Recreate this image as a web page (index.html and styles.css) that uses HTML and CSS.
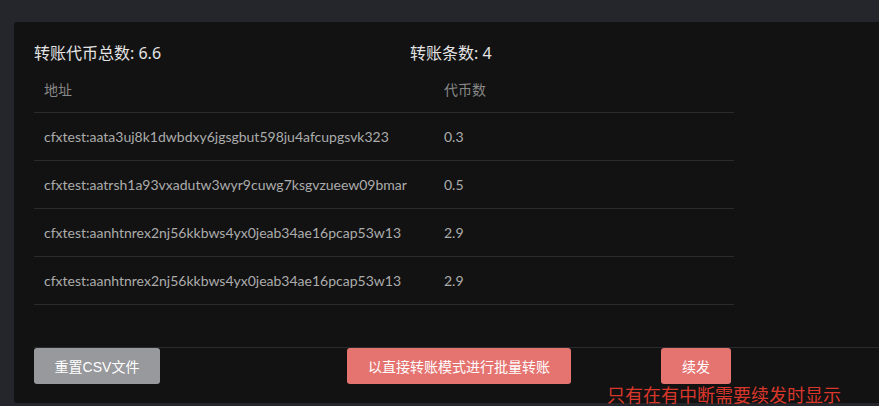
FILE: index.html
```html
<!DOCTYPE html>
<html lang="zh">
<head>
<meta charset="utf-8">
<title>批量转账</title>
<link rel="stylesheet" href="styles.css">
</head>
<body>
<div class="panel">
  <div class="summary">
    <span class="summary-item summary-total">转账代币总数: 6.6</span>
    <span class="summary-item">转账条数: 4</span>
  </div>
  <table class="list">
    <thead>
      <tr><th class="col-addr">地址</th><th class="col-amt">代币数</th></tr>
    </thead>
    <tbody>
      <tr><td>cfxtest:aata3uj8k1dwbdxy6jgsgbut598ju4afcupgsvk323</td><td>0.3</td></tr>
      <tr><td>cfxtest:aatrsh1a93vxadutw3wyr9cuwg7ksgvzueew09bmar</td><td>0.5</td></tr>
      <tr><td>cfxtest:aanhtnrex2nj56kkbws4yx0jeab34ae16pcap53w13</td><td>2.9</td></tr>
      <tr><td>cfxtest:aanhtnrex2nj56kkbws4yx0jeab34ae16pcap53w13</td><td>2.9</td></tr>
    </tbody>
  </table>
  <div class="footer">
    <div class="actions">
      <button class="btn btn-gray">重置CSV文件</button>
      <button class="btn btn-red btn-main">以直接转账模式进行批量转账</button>
      <button class="btn btn-red btn-resume">续发</button>
    </div>
    <div class="note">只有在有中断需要续发时显示</div>
  </div>
</div>
</body>
</html>
```

FILE: styles.css
```css
html, body {
  margin: 0;
  padding: 0;
  overflow: hidden;
  background: #25262b;
  height: 100%;
}

body {
  font-family: "Noto Sans", "Noto Sans CJK SC", sans-serif;
}

.panel {
  margin: 22px 0 0 14px;
  width: 1000px;
  height: 381px;
  box-sizing: border-box;
  padding: 20px 0 0 20px;
  background: #121212;
  border-radius: 3px;
}

.summary {
  display: flex;
  height: 23px;
  line-height: 22px;
  font-size: 16px;
  color: #e4e4e4;
  font-family: "Noto Sans", "Noto Sans CJK SC", sans-serif;
}

.summary-total {
  width: 376px;
}

.list {
  width: 700px;
  border-collapse: collapse;
  table-layout: fixed;
}

.list th,
.list td {
  height: 47px;
  padding: 0 10px;
  text-align: left;
  border-bottom: 1px solid #2a2b2f;
}

.list th {
  font-weight: normal;
  font-size: 14px;
  color: #888888;
  font-family: "Noto Sans CJK SC", sans-serif;
}

.list td {
  font-size: 14px;
  color: #acacac;
  font-family: Lato, "Noto Sans CJK SC", sans-serif;
}

.col-addr {
  width: 380px;
}

.footer {
  margin-top: 42px;
  border-top: 1px solid #2a2b2f;
}

.actions {
  display: flex;
  align-items: center;
}

.btn {
  height: 36px;
  border: none;
  border-radius: 3px;
  color: #ffffff;
  font-size: 14px;
  font-family: "Liberation Sans", "Noto Sans CJK SC", sans-serif;
  padding: 0;
}

.btn-gray {
  width: 126px;
  background: #98999d;
}

.btn-red {
  background: #e57471;
}

.btn-main {
  width: 224px;
  margin-left: 187px;
}

.btn-resume {
  width: 70px;
  margin-left: 90px;
}

.note {
  margin-left: 573px;
  font-size: 18px;
  line-height: 20px;
  color: #d9372b;
  font-family: "Noto Sans CJK SC", sans-serif;
}
```
